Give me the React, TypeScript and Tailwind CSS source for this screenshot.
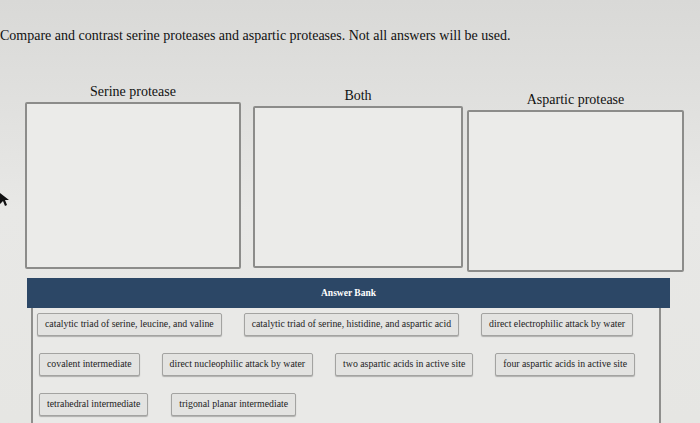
import React from "react";

const serif = { fontFamily: '"Liberation Serif", "Times New Roman", serif' };

function Chip({ label }: { label: string }) {
  return (
    <div className="h-[23px] px-[7px] flex items-center bg-[#e3e3e1] border border-[#a3a3a1] rounded-[2px] shadow-[0_1px_1px_rgba(0,0,0,0.25)] text-[9.8px] text-[#222] whitespace-nowrap">
      {label}
    </div>
  );
}

function Column({ title, width, height, offset }: { title: string; width: string; height: string; offset: string }) {
  return (
    <div className={`flex flex-col items-center ${offset}`}>
      <div className="text-[14px] leading-[16px] text-[#111] mb-[2px]">{title}</div>
      <div className={`${width} ${height} border-2 border-[#8c8c8a] rounded-[2px] bg-[#ebebe9]`}></div>
    </div>
  );
}

export default function App() {
  return (
    <div
      style={serif}
      className="relative w-[700px] h-[423px] overflow-hidden bg-gradient-to-b from-[#d9d9d7] via-[#e8e8e6] to-[#e6e6e3]"
    >
      {/* mouse pointer from the photo */}
      <svg className="absolute left-0 top-[193px]" width="10" height="14" viewBox="0 0 10 14">
        <path d="M0 0 L0 11 L3 8 L5 13 L7 12 L5 7 L9 7 Z" fill="#111" />
      </svg>

      <div className="pt-[27px] text-[14px] leading-[18px] text-[#111]">
        Compare and contrast serine proteases and aspartic proteases. Not all answers will be used.
      </div>

      <div className="flex items-start mt-[39px] ml-[25px]">
        <Column title="Serine protease" width="w-[216px]" height="h-[167px]" offset="mt-0" />
        <div className="w-[12px]" />
        <Column title="Both" width="w-[210px]" height="h-[162px]" offset="mt-[4px]" />
        <div className="w-[4px]" />
        <Column title="Aspartic protease" width="w-[217px]" height="h-[162px]" offset="mt-[8px]" />
      </div>

      <div className="ml-[27px] mt-[6px] w-[643px]">
        <div className="h-[30px] bg-[#2c4766] flex items-center justify-center text-white text-[9.5px] font-bold">
          Answer Bank
        </div>
        <div className="ml-[4px] w-[630px] h-[140px] border-l-2 border-r-2 border-[#8f8f8d] bg-[#e9e9e7] pl-[4px] pt-[5px] flex flex-col gap-[17px]">
          <div className="flex gap-[22px]">
            <Chip label="catalytic triad of serine, leucine, and valine" />
            <Chip label="catalytic triad of serine, histidine, and aspartic acid" />
            <Chip label="direct electrophilic attack by water" />
          </div>
          <div className="flex gap-[22px] pl-[2px]">
            <Chip label="covalent intermediate" />
            <Chip label="direct nucleophilic attack by water" />
            <Chip label="two aspartic acids in active site" />
            <Chip label="four aspartic acids in active site" />
          </div>
          <div className="flex gap-[23px] pl-[2px]">
            <Chip label="tetrahedral intermediate" />
            <Chip label="trigonal planar intermediate" />
          </div>
        </div>
      </div>
    </div>
  );
}
